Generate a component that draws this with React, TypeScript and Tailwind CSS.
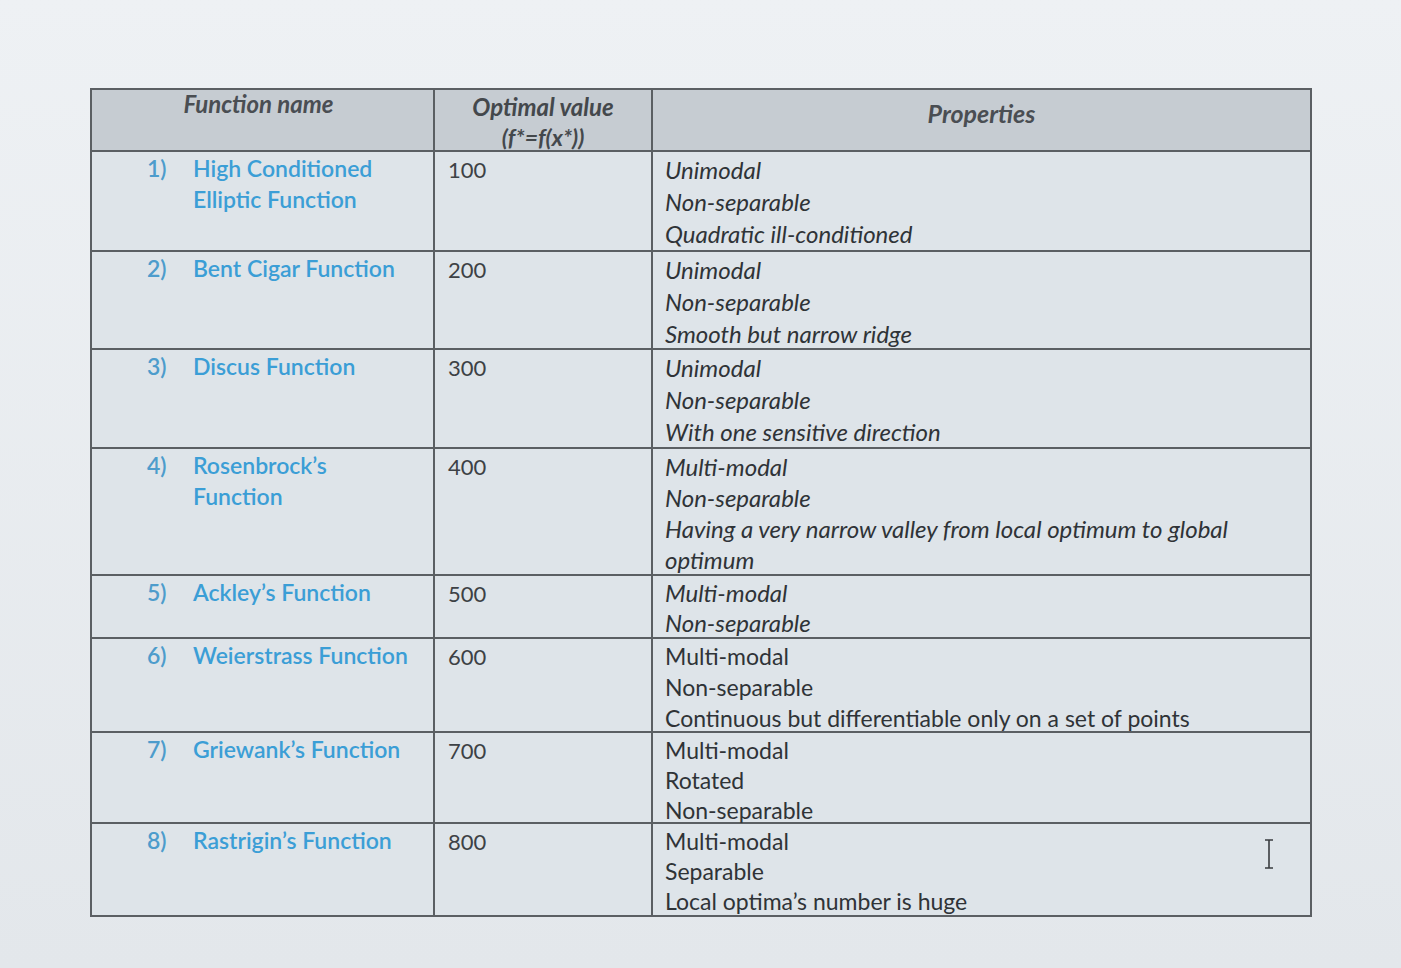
import React from "react";

type Row = {
  no: string;
  name: string[];
  value: string;
  props: string[];
  italic: boolean;
  h: string;
  lh: string;
};

const ROWS: Row[] = [
  { no: "1)", name: ["High Conditioned", "Elliptic Function"], value: "100", props: ["Unimodal", "Non-separable", "Quadratic ill-conditioned"], italic: true, h: "h-[100px]", lh: "leading-[32px]" },
  { no: "2)", name: ["Bent Cigar Function"], value: "200", props: ["Unimodal", "Non-separable", "Smooth but narrow ridge"], italic: true, h: "h-[98px]", lh: "leading-[32px]" },
  { no: "3)", name: ["Discus Function"], value: "300", props: ["Unimodal", "Non-separable", "With one sensitive direction"], italic: true, h: "h-[99px]", lh: "leading-[32px]" },
  { no: "4)", name: ["Rosenbrock\u2019s", "Function"], value: "400", props: ["Multi-modal", "Non-separable", "Having a very narrow valley from local optimum to global", "optimum"], italic: true, h: "h-[127px]", lh: "leading-[31px]" },
  { no: "5)", name: ["Ackley\u2019s Function"], value: "500", props: ["Multi-modal", "Non-separable"], italic: true, h: "h-[63px]", lh: "leading-[30px]" },
  { no: "6)", name: ["Weierstrass Function"], value: "600", props: ["Multi-modal", "Non-separable", "Continuous but differentiable only on a set of points"], italic: false, h: "h-[94px]", lh: "leading-[31px]" },
  { no: "7)", name: ["Griewank\u2019s Function"], value: "700", props: ["Multi-modal", "Rotated", "Non-separable"], italic: false, h: "h-[91px]", lh: "leading-[30px]" },
  { no: "8)", name: ["Rastrigin\u2019s Function"], value: "800", props: ["Multi-modal", "Separable", "Local optima\u2019s number is huge"], italic: false, h: "h-[91px]", lh: "leading-[30px]" },
];

const font = "font-['Lato','Open_Sans',sans-serif]";

export default function App() {
  return (
    <div className={`w-[1401px] h-[968px] bg-gradient-to-b from-[#eef1f4] to-[#e3e7eb] pt-[88px] pl-[90px] ${font}`}>
      <div className="relative w-[1222px] border-2 border-[#5b5f63] bg-[#dee4e9]">
        {/* header */}
        <div className="grid grid-cols-[343px_218px_1fr] h-[62px] bg-[#c6ccd2] border-b-2 border-[#5b5f63]">
          <div className="border-r-2 border-[#5b5f63] text-center pr-[8px] pt-0 text-[24px] leading-[28px] italic font-bold text-[#4a4e53]">
            Function name
          </div>
          <div className="border-r-2 border-[#5b5f63] text-center pt-[2px] text-[24px] italic font-bold text-[#44484c] leading-[30px]">
            <div>Optimal value</div>
            <div className="text-[23px]">(f*=f(x*))</div>
          </div>
          <div className="text-center pt-[8px] text-[25px] leading-[30px] italic font-bold text-[#4a4e53]">Properties</div>
        </div>
        {ROWS.map((r, i) => (
          <div
            key={r.no}
            className={`grid grid-cols-[343px_218px_1fr] ${r.h} ${i < ROWS.length - 1 ? "border-b-2 border-[#5b5f63]" : ""}`}
          >
            <div className="border-r-2 border-[#5b5f63] flex pt-[1px] pl-[55px] text-[23px] font-semibold leading-[31px] text-[#3b9ed6]">
              <span className="w-[46px] text-[#4d9ccc]">{r.no}</span>
              <div>
                {r.name.map((n) => (
                  <div key={n}>{n}</div>
                ))}
              </div>
            </div>
            <div className="border-r-2 border-[#5b5f63] pt-[3px] pl-[13px] text-[22px] leading-[30px] text-[#3d4145]">
              {r.value}
            </div>
            <div
              className={`pt-[2px] pl-[12px] ${r.lh} text-[#2f3337] ${r.italic ? "italic text-[24px]" : "text-[23px]"}`}
            >
              {r.props.map((p) => (
                <div key={p}>{p}</div>
              ))}
            </div>
          </div>
        ))}
        {/* text cursor */}
        <svg className="absolute left-[1170px] top-[748px]" width="14" height="32" viewBox="0 0 14 32">
          <path d="M3 2h8M7 2v28M3 30h8" stroke="#3a3d40" strokeWidth="1.6" fill="none" />
        </svg>
      </div>
    </div>
  );
}
